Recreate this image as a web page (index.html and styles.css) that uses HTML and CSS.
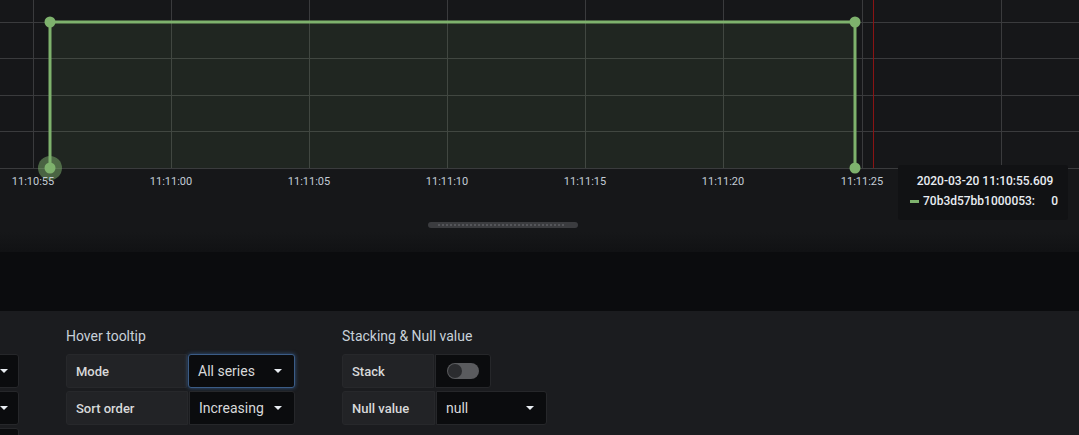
FILE: index.html
```html
<!DOCTYPE html>
<html>
<head>
<meta charset="utf-8">
<link rel="stylesheet" href="styles.css">
</head>
<body>
<div class="viz">
  <svg class="chart" width="1079" height="200" viewBox="0 0 1079 200">
    <g class="grid">
      <line x1="0" y1="22.5" x2="1079" y2="22.5"/>
      <line x1="0" y1="58.5" x2="1079" y2="58.5"/>
      <line x1="0" y1="95.5" x2="1079" y2="95.5"/>
      <line x1="0" y1="131.5" x2="1079" y2="131.5"/>
      <line x1="0" y1="168.5" x2="1079" y2="168.5"/>
      <line x1="33.5" y1="0" x2="33.5" y2="168"/>
      <line x1="171.5" y1="0" x2="171.5" y2="168"/>
      <line x1="309.5" y1="0" x2="309.5" y2="168"/>
      <line x1="447.5" y1="0" x2="447.5" y2="168"/>
      <line x1="585.5" y1="0" x2="585.5" y2="168"/>
      <line x1="723.5" y1="0" x2="723.5" y2="168"/>
      <line x1="862.5" y1="0" x2="862.5" y2="168"/>
      <line x1="1001.5" y1="0" x2="1001.5" y2="168"/>
    </g>
    <rect class="fill" x="50" y="22" width="805" height="146"/>
    <line class="cursor" x1="873.5" y1="0" x2="873.5" y2="168"/>
    <path class="series" d="M50,168 V22 H855 V168"/>
    <circle class="hover" cx="50" cy="168" r="12"/>
    <circle class="pt" cx="50" cy="22" r="5.5"/>
    <circle class="pt" cx="855" cy="22" r="5.5"/>
    <circle class="pt" cx="855" cy="168" r="5.5"/>
    <circle class="pt" cx="50" cy="168" r="5.5"/>
    <g class="ticks">
      <text x="33" y="185">11:10:55</text>
      <text x="171" y="185">11:11:00</text>
      <text x="309" y="185">11:11:05</text>
      <text x="447" y="185">11:11:10</text>
      <text x="585" y="185">11:11:15</text>
      <text x="723" y="185">11:11:20</text>
      <text x="862" y="185">11:11:25</text>
    </g>
  </svg>
  <div class="scroll-handle"></div>
  <div class="tooltip">
    <div class="tt-time">2020-03-20 11:10:55.609</div>
    <div class="tt-row"><span class="tt-swatch"></span><span class="tt-name">70b3d57bb1000053:</span><span class="tt-val">0</span></div>
  </div>
</div>
<div class="gap"></div>
<div class="options">
  <div class="group group-cut">
    <div class="group-title"></div>
    <div class="row"><div class="label w-lbl"></div><div class="select w-cut"><span></span><i class="caret"></i></div></div>
    <div class="row"><div class="label w-lbl"></div><div class="select w-cut"><span></span><i class="caret"></i></div></div>
    <div class="row"><div class="label w-lbl"></div><div class="select w-cut"><span></span><i class="caret"></i></div></div>
  </div>
  <div class="group">
    <div class="group-title">Hover tooltip</div>
    <div class="row"><div class="label w-hover">Mode</div><div class="select focused w-hsel"><span>All series</span><i class="caret"></i></div></div>
    <div class="row"><div class="label w-hover2">Sort order</div><div class="select w-hsel2"><span>Increasing</span><i class="caret"></i></div></div>
  </div>
  <div class="group">
    <div class="group-title">Stacking &amp; Null value</div>
    <div class="row"><div class="label w-stack">Stack</div><div class="switch-box"><span class="switch"><span class="knob"></span></span></div></div>
    <div class="row"><div class="label w-null">Null value</div><div class="select w-nsel"><span>null</span><i class="caret"></i></div></div>
  </div>
</div>
</body>
</html>
```

FILE: styles.css
```css
html, body {
  margin: 0;
  padding: 0;
  width: 1079px;
  height: 435px;
  overflow: hidden;
  background: #1b1c1f;
  font-family: Roboto, "Liberation Sans", sans-serif;
}

.viz {
  position: relative;
  height: 252px;
  background: linear-gradient(to bottom, #161719 0px, #161719 232px, #111214 251px);
}

.chart {
  display: block;
}

.grid line {
  stroke: #3a3b3d;
  stroke-width: 1;
}

.fill {
  fill: #7eb26d;
  fill-opacity: 0.1;
}

.cursor {
  stroke: #8a1414;
  stroke-width: 1;
}

.series {
  fill: none;
  stroke: #7eb26d;
  stroke-width: 3;
}

.pt {
  fill: #7eb26d;
}

.hover {
  fill: #7eb26d;
  fill-opacity: 0.5;
}

.ticks text {
  fill: #c3ccd6;
  font-family: Roboto, "Liberation Sans", sans-serif;
  font-size: 11px;
  text-anchor: middle;
}

.scroll-handle {
  position: relative;
  margin: 22px 0 0 428px;
  width: 150px;
  height: 6px;
  border-radius: 3px;
  background: #3b3c3f;
}

.scroll-handle::before {
  content: "";
  position: absolute;
  left: 10px;
  right: 12px;
  top: 2px;
  height: 2px;
  background-image: linear-gradient(to right, #55565a 2px, transparent 2px);
  background-size: 4px 2px;
  background-repeat: repeat-x;
}

.tooltip {
  position: absolute;
  left: 898px;
  top: 165px;
  width: 170px;
  height: 55px;
  box-sizing: border-box;
  background: #111214;
  border-radius: 3px;
  padding: 8px 10px 0 12px;
  color: #e9edf2;
  font-size: 12px;
  font-weight: 500;
}

.tt-time {
  text-align: center;
  line-height: 16px;
  padding-left: 2px;
}

.tt-row {
  display: flex;
  align-items: center;
  margin-top: 4px;
  line-height: 16px;
}

.tt-swatch {
  width: 9px;
  height: 3px;
  background: #7eb26d;
  margin-right: 4px;
}

.tt-name {
  flex: 1;
}

.gap {
  height: 59px;
  background: #0b0c0e;
}

.options {
  display: flex;
  gap: 47px;
  margin-left: -182px;
  padding-top: 17px;
}

.group-title {
  color: #c7d0d9;
  font-size: 14px;
  line-height: 17px;
  height: 17px;
  margin-bottom: 9px;
}

.row {
  display: flex;
  height: 34px;
  margin-bottom: 3px;
  gap: 1px;
}

.label {
  box-sizing: border-box;
  background: #222326;
  border: 1px solid #27282b;
  border-radius: 3px 0 0 3px;
  color: #d8d9da;
  font-size: 13px;
  font-weight: 500;
  display: flex;
  align-items: center;
  padding-left: 9px;
}

.select {
  box-sizing: border-box;
  background: #0b0c0e;
  border: 1px solid #26272a;
  border-radius: 0 3px 3px 0;
  color: #d8d9da;
  font-size: 14px;
  display: flex;
  align-items: center;
  justify-content: space-between;
  padding: 0 12px 0 9px;
}

.select.focused {
  border: 1px solid #3b5c86;
  border-radius: 3px;
  box-shadow: 0 0 4px rgba(70, 130, 210, 0.55);
}

.caret {
  display: block;
  width: 0;
  height: 0;
  border-left: 4px solid transparent;
  border-right: 4px solid transparent;
  border-top: 4px solid #e9edf2;
}

.w-lbl { width: 80px; }
.w-cut { width: 120px; padding-right: 10px; }
.w-hover { width: 121px; }
.w-hsel { width: 107px; }
.w-hover2 { width: 122px; }
.w-hsel2 { width: 106px; }
.w-stack { width: 92px; }
.w-null { width: 93px; }
.w-nsel { width: 111px; }

.switch-box {
  box-sizing: border-box;
  width: 56px;
  background: #0b0c0e;
  border: 1px solid #26272a;
  border-radius: 0 3px 3px 0;
  display: flex;
  align-items: center;
  padding-left: 11px;
}

.switch {
  position: relative;
  display: block;
  width: 32px;
  height: 16px;
  border-radius: 8px;
  background: #5a5b5e;
}

.knob {
  position: absolute;
  left: 1px;
  top: 1px;
  width: 14px;
  height: 14px;
  border-radius: 50%;
  background: #2b2c2f;
}
```
